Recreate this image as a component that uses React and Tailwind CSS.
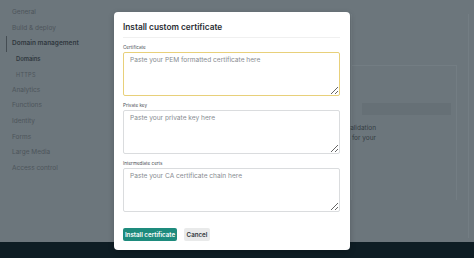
import React from 'react';

const NAV = [
  { label: 'General' },
  { label: 'Build & deploy' },
  { label: 'Domain management', active: true },
  { label: 'Domains', sub: true, bold: true },
  { label: 'HTTPS', sub: true, small: true },
  { label: 'Analytics' },
  { label: 'Functions' },
  { label: 'Identity' },
  { label: 'Forms' },
  { label: 'Large Media' },
  { label: 'Access control' },
];

const FIELDS = [
  { label: 'Certificate', placeholder: 'Paste your PEM formatted certificate here', focused: true },
  { label: 'Private key', placeholder: 'Paste your private key here' },
  { label: 'Intermediate certs', placeholder: 'Paste your CA certificate chain here' },
];

export default function App() {
  return (
    <div
      className="relative w-[474px] h-[258px] overflow-hidden bg-[#6c767c] flex flex-col"
      style={{ fontFamily: 'Inter, "Liberation Sans", sans-serif' }}
    >
      <div className="flex flex-1">
        {/* Sidebar */}
        <aside className="w-[110px] pt-[5px] flex flex-col">
          {NAV.map((item) => (
            <div
              key={item.label}
              className={`h-[15.6px] flex items-center whitespace-nowrap ${
                item.sub ? 'pl-[16px]' : 'pl-[12px]'
              } ${item.active ? 'border-l border-[#454d53] ml-[6px] !pl-[5px] font-semibold text-[#30383e]' : ''} ${
                item.bold ? 'font-semibold text-[#30383e]' : ''
              } ${item.active || item.bold ? '' : 'text-[#4c555b]'} ${
                item.small ? 'text-[5.5px] tracking-[0.3px]' : item.sub ? 'text-[5.8px]' : 'text-[6.5px]'
              }`}
            >
              {item.label}
            </div>
          ))}
        </aside>

        {/* Page behind the overlay */}
        <main className="flex-1 flex pl-[8px] pr-[5px] pt-[14px]">
          <div className="flex-1 pr-[4px]">
            <div className="ml-[233px] mr-[7px] h-[186px] border-l border-[#737d83] pt-[51px]">
              <div className="border-t border-r border-[#737d83] h-[135px] pt-[37px] pl-[10px] pr-[5px]">
                <div className="h-[12px] bg-[#667076]" />
              </div>
            </div>
          </div>
          <div className="w-px bg-[#737d83] mb-[4px]" />
        </main>
      </div>

      {/* faint text under overlay */}
      <div className="absolute right-[98px] top-[124px] text-right text-[6.5px] leading-[9.5px] text-[#353d43] whitespace-nowrap">
        <p>Certificates are issued after DNS domain validation</p>
        <p>Provide your own certificate files for your</p>
      </div>

      <div className="h-[16px] bg-[#0e1d24]" />

      {/* Modal */}
      <div className="absolute left-[114px] top-[12px] w-[236px] h-[238px] bg-white rounded-[4px] pl-[9px] pr-[10px] pt-[9px] shadow-[0_2px_6px_rgba(0,0,0,0.2)]">
        <h2 className="text-[8.3px] leading-[12px] font-semibold text-[#2a2e33] pb-[4px] border-b border-[#f0f0f0]">
          Install custom certificate
        </h2>

        <div className="pt-[7px] flex flex-col gap-[7px]">
          {FIELDS.map((f) => (
            <div key={f.label} className="flex flex-col gap-[1px]">
              <label className="text-[4.6px] leading-[6px] text-[#4a4f55]">{f.label}</label>
              <textarea
                placeholder={f.placeholder}
                className={`w-full h-[44px] rounded-[2px] px-[6px] pt-[3px] text-[6.6px] leading-[9px] placeholder:text-[#878c91] outline-none ${
                  f.focused ? 'border-[1.5px] border-[#e8d07a]' : 'border border-[#dadcde]'
                }`}
              />
            </div>
          ))}
        </div>

        <div className="mt-[16px] flex gap-[7px]">
          <button className="h-[13px] w-[54px] rounded-[2px] bg-[#1e8b7d] text-white text-[6.2px] font-semibold">
            Install certificate
          </button>
          <button className="h-[13px] w-[26px] rounded-[2px] bg-[#e9eaea] text-[#30353a] text-[6.2px] font-semibold">
            Cancel
          </button>
        </div>
      </div>
    </div>
  );
}
